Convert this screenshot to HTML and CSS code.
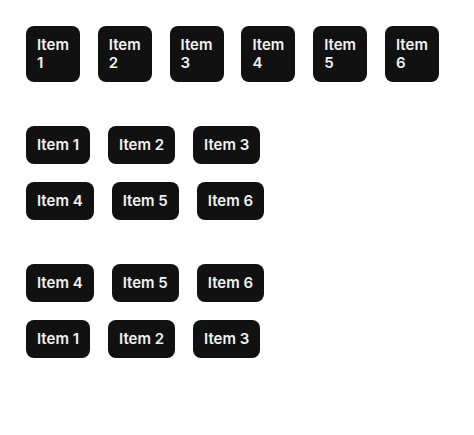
FILE: index.html
```html
<!DOCTYPE html>
<html lang="en">
<head>
<meta charset="utf-8">
<title>Items</title>
<link rel="stylesheet" href="styles.css">
</head>
<body>
<main class="page">
  <section class="strip">
    <div class="chip chip-narrow">Item 1</div>
    <div class="chip chip-narrow">Item 2</div>
    <div class="chip chip-narrow">Item 3</div>
    <div class="chip chip-narrow">Item 4</div>
    <div class="chip chip-narrow">Item 5</div>
    <div class="chip chip-narrow">Item 6</div>
  </section>

  <section class="stack">
    <div class="row">
      <div class="chip">Item 1</div>
      <div class="chip">Item 2</div>
      <div class="chip">Item 3</div>
    </div>
    <div class="row">
      <div class="chip">Item 4</div>
      <div class="chip">Item 5</div>
      <div class="chip">Item 6</div>
    </div>
  </section>

  <section class="stack">
    <div class="row">
      <div class="chip">Item 4</div>
      <div class="chip">Item 5</div>
      <div class="chip">Item 6</div>
    </div>
    <div class="row">
      <div class="chip">Item 1</div>
      <div class="chip">Item 2</div>
      <div class="chip">Item 3</div>
    </div>
  </section>
</main>
</body>
</html>
```
FILE: styles.css
```css
html, body {
  margin: 0;
  padding: 0;
  background: #ffffff;
}

body {
  font-family: Inter, "Noto Sans", sans-serif;
}

.page {
  display: flex;
  flex-direction: column;
  gap: 44px;
  padding: 26px 0 0 26px;
}

.strip {
  display: flex;
  justify-content: space-between;
  width: 413px;
}

.stack {
  display: flex;
  flex-direction: column;
  gap: 18px;
}

.row {
  display: flex;
  gap: 18px;
}

.chip {
  background: #111111;
  color: #f2f2f2;
  font-size: 15px;
  font-weight: 600;
  line-height: 18px;
  padding: 10px 11px;
  border-radius: 8px;
  white-space: nowrap;
}

.chip-narrow {
  white-space: normal;
  width: 32px;
}
```
